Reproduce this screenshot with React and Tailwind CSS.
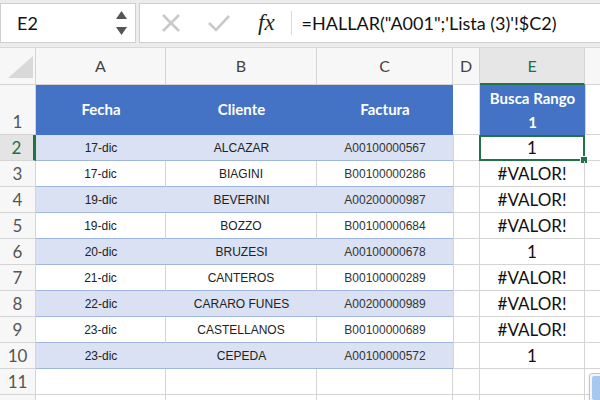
import React from 'react';

const rows = [
  ['17-dic', 'ALCAZAR', 'A00100000567', '1'],
  ['17-dic', 'BIAGINI', 'B00100000286', '#VALOR!'],
  ['19-dic', 'BEVERINI', 'A00200000987', '#VALOR!'],
  ['19-dic', 'BOZZO', 'B00100000684', '#VALOR!'],
  ['20-dic', 'BRUZESI', 'A00100000678', '1'],
  ['21-dic', 'CANTEROS', 'B00100000289', '#VALOR!'],
  ['22-dic', 'CARARO FUNES', 'A00200000989', '#VALOR!'],
  ['23-dic', 'CASTELLANOS', 'B00100000689', '#VALOR!'],
  ['23-dic', 'CEPEDA', 'A00100000572', '1'],
];

const calibri = { fontFamily: 'Lato, "Open Sans", sans-serif' };
const arial = { fontFamily: '"Liberation Sans", Arial, sans-serif' };

const RowHead = ({ n, h, selected }) => (
  <div
    className={`w-[36px] ${h} shrink-0 flex items-end justify-center pb-[1px] border-r border-b border-[#d4d4d4] text-[17px] leading-[22px] ${
      selected ? 'bg-[#e4e4e4] text-[#1e7142] border-r-[3px] border-r-[#217346]' : 'bg-[#f7f7f7] text-[#555]'
    }`}
    style={calibri}
  >
    {n}
  </div>
);

export default function App() {
  return (
    <div className="w-[600px] h-[400px] overflow-hidden bg-white relative">
      {/* Formula bar */}
      <div className="h-[48px] bg-[#ececec] flex pt-[3px] gap-[3px] border-b border-[#d6d6d6]">
        <div className="w-[136px] h-[40px] bg-white border border-[#cfcfcf] flex items-center justify-between pl-[16px] pr-[8px]">
          <span className="text-[18px] text-[#111]" style={calibri}>E2</span>
          <div className="flex flex-col gap-[8px]">
            <svg width="11" height="8" viewBox="0 0 11 8"><path d="M5.5 0L11 8H0z" fill="#555" /></svg>
            <svg width="11" height="8" viewBox="0 0 11 8"><path d="M0 0h11L5.5 8z" fill="#555" /></svg>
          </div>
        </div>
        <div className="flex-1 h-[40px] bg-white border-l border-t border-b border-[#cfcfcf] flex items-center">
          <div className="flex items-center pl-[21px] gap-[27px]">
            <svg width="20" height="20" viewBox="0 0 20 20"><path d="M2 2L18 18M18 2L2 18" stroke="#c9c9c9" strokeWidth="2.6" /></svg>
            <svg width="22" height="18" viewBox="0 0 22 18"><path d="M1 9L8 16L21 2" stroke="#c9c9c9" strokeWidth="2.6" fill="none" /></svg>
            <span className="text-[23px] italic text-[#222] ml-[1px]" style={{ fontFamily: '"Liberation Serif", serif' }}>fx</span>
          </div>
          <div className="w-[1px] h-[24px] bg-[#d8d8d8] ml-[16px]" />
          <span className="ml-[10px] text-[18px] text-[#111] whitespace-nowrap" style={calibri}>
            =HALLAR("A001";'Lista (3)'!$C2)
          </span>
        </div>
      </div>

      {/* Column headers */}
      <div className="flex h-[37px] text-[16px] text-[#444]" style={calibri}>
        <div className="w-[36px] shrink-0 bg-[#f7f7f7] border-r border-b border-[#d4d4d4] relative">
          <svg className="absolute left-[8px] top-[8px]" width="25" height="22" viewBox="0 0 25 22"><path d="M25 0V22H0z" fill="#d9d9d9" /></svg>
        </div>
        <div className="w-[130px] shrink-0 bg-[#f7f7f7] border-r border-b border-[#d4d4d4] flex items-center justify-center">A</div>
        <div className="w-[151px] shrink-0 bg-[#f7f7f7] border-r border-b border-[#d4d4d4] flex items-center justify-center">B</div>
        <div className="w-[136px] shrink-0 bg-[#f7f7f7] border-r border-b border-[#d4d4d4] flex items-center justify-center">C</div>
        <div className="w-[27px] shrink-0 bg-[#f7f7f7] border-r border-b border-[#d4d4d4] flex items-center justify-center">D</div>
        <div className="w-[105px] shrink-0 bg-[#e6e6e6] border-r border-[#d4d4d4] border-b-2 border-b-[#217346] flex items-center justify-center text-[#1e7142]">E</div>
        <div className="flex-1 bg-[#f7f7f7] border-b border-[#d4d4d4]" />
      </div>

      {/* Row 1 */}
      <div className="flex">
        <RowHead n="1" h="h-[50px]" />
        <div className="w-[417px] shrink-0 h-[50px] bg-[#4472c4] border-b border-[#4472c4] flex items-center text-white font-bold text-[15px]" style={calibri}>
          <div className="w-[130px] text-center">Fecha</div>
          <div className="w-[151px] text-center">Cliente</div>
          <div className="w-[136px] text-center">Factura</div>
        </div>
        <div className="w-[27px] shrink-0 h-[50px] border-r border-b border-[#d4d4d4]" />
        <div className="w-[105px] shrink-0 h-[50px] bg-[#4472c4] border-b border-[#4472c4] flex items-center justify-center text-center text-white font-bold text-[15px] leading-[24px]" style={calibri}>
          Busca Rango<br />1
        </div>
        <div className="flex-1 h-[50px] border-b border-l border-[#d4d4d4]" />
      </div>

      {/* Data rows */}
      {rows.map((r, i) => {
        const band = i % 2 === 0;
        const cell = band
          ? 'bg-[#d9e1f2] border-b border-b-[#9fb6e0]'
          : 'bg-white border-b border-b-[#9fb6e0] border-r border-r-[#d4d4d4]';
        const sel = i === 0;
        return (
          <div key={i} className="flex h-[26px] text-[12px] text-[#222]">
            <RowHead n={String(i + 2)} h="h-[26px]" selected={sel} />
            <div className={`w-[130px] shrink-0 flex items-center justify-center ${cell}`} style={arial}>{r[0]}</div>
            <div className={`w-[151px] shrink-0 flex items-center justify-center ${cell}`} style={arial}>{r[1]}</div>
            <div className={`w-[136px] shrink-0 flex items-center justify-center text-[#333] ${band ? 'bg-[#d9e1f2] border-b border-b-[#9fb6e0]' : 'bg-white border-b border-b-[#9fb6e0]'}`} style={arial}>{r[2]}</div>
            <div className="w-[27px] shrink-0 border-l border-r border-b border-[#d4d4d4]" />
            <div
              className={`w-[105px] shrink-0 flex items-center justify-center text-[17px] text-[#111] relative ${
                sel ? 'border-2 border-[#217346] -ml-[1px] w-[106px]' : 'border-r border-b border-[#d4d4d4]'
              }`}
              style={calibri}
            >
              {r[3]}
              {sel && <div className="absolute -right-[5px] -bottom-[5px] w-[8px] h-[8px] bg-[#217346] border border-white" />}
            </div>
            <div className="flex-1 border-b border-[#d4d4d4]" />
          </div>
        );
      })}

      {/* Rows 11-12 */}
      {['11', ''].map((n, k) => (
        <div key={k} className="flex h-[26px]">
          <RowHead n={n} h="h-[26px]" />
          <div className="w-[130px] shrink-0 border-r border-b border-[#d4d4d4]" />
          <div className="w-[151px] shrink-0 border-r border-b border-[#d4d4d4]" />
          <div className="w-[136px] shrink-0 border-r border-b border-[#d4d4d4]" />
          <div className="w-[27px] shrink-0 border-r border-b border-[#d4d4d4]" />
          <div className="w-[105px] shrink-0 border-r border-b border-[#d4d4d4]" />
          <div className="flex-1 border-b border-[#d4d4d4]" />
        </div>
      ))}

      {/* Quick analysis button */}
      <div className="absolute left-[589px] top-[373px] w-[30px] h-[30px] rounded-[3px] border border-[#c4c4c4] bg-[#f4f4f4] p-[2px] shadow-sm">
        <div className="w-full h-full bg-[#a9c8f0] rounded-[2px]" />
      </div>
    </div>
  );
}
